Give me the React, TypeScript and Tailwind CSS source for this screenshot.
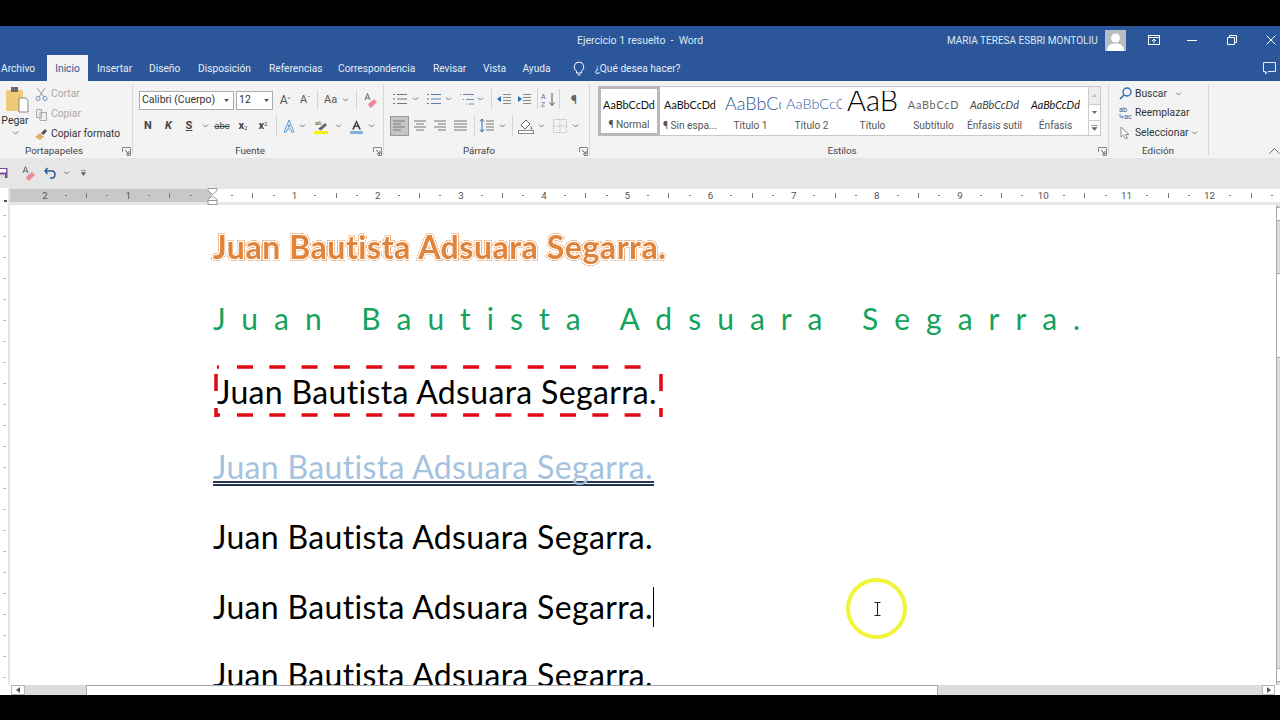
import React from "react";

const ui = "font-['Roboto','Open_Sans',sans-serif]";
const doc = "font-['Lato','Carlito',sans-serif]";

const Chev = ({ className = "" }: { className?: string }) => (
  <svg width="7" height="4" viewBox="0 0 7 4" className={className}>
    <path d="M1 .5 3.5 3 6 .5" fill="none" stroke="#777" strokeWidth="1" />
  </svg>
);

const Launcher = () => (
  <svg width="9" height="9" viewBox="0 0 9 9">
    <path d="M.5 5V.5H8.5V8.5H5" fill="none" stroke="#888" />
    <path d="M3 3 7 7M7 4V7H4" fill="none" stroke="#666" />
  </svg>
);

const Eraser = () => (
  <svg width="16" height="17" viewBox="0 0 16 17">
    <path d="M3 8 5.5 1.5 8 8M4 6H7" fill="none" stroke="#666" strokeWidth="1" />
    <path d="M6 12 12 7 15 10 9.5 15.5H7.5Z" fill="#ef8a9b" />
  </svg>
);

const Lines = ({ kind }: { kind: "l" | "c" | "r" | "j" }) => {
  const d = {
    l: "M1 2H13M1 5H9M1 8H13M1 11H9",
    c: "M1 2H13M3 5H11M1 8H13M3 11H11",
    r: "M1 2H13M5 5H13M1 8H13M5 11H13",
    j: "M1 2H14M1 5H14M1 8H14M1 11H14",
  }[kind];
  return (
    <svg width="15" height="13" viewBox="0 0 15 13">
      <path d={d} stroke="#777" strokeWidth="1" fill="none" />
    </svg>
  );
};

const Sep = ({ className = "" }: { className?: string }) => (
  <div className={`w-px h-[20px] bg-[#d4d4d4] ${className}`} />
);

const Tab = ({ label, className }: { label: string; className: string }) => (
  <div className={`text-center whitespace-nowrap ${className}`}>{label}</div>
);

const Style = ({
  sample,
  label,
  sampleClass,
  rowClass = "justify-center",
  itemClass = "w-[61px]",
}: {
  sample: string;
  label: string;
  sampleClass: string;
  rowClass?: string;
  itemClass?: string;
}) => (
  <div className={`h-full flex flex-col items-center overflow-hidden ${itemClass}`}>
    <div className={`h-[27px] w-full flex items-end overflow-hidden px-[5px] ${rowClass}`}>
      <div className={`whitespace-nowrap ${sampleClass}`}>{sample}</div>
    </div>
    <div className={`${ui} text-[10.2px] leading-[12px] mt-[6px] text-[#555] whitespace-nowrap`}>{label}</div>
  </div>
);

const GroupLabel = ({ text, textClass, launcherClass }: { text: string; textClass: string; launcherClass?: string }) => (
  <div className={`${ui} h-[13px] shrink-0 flex items-center text-[9.8px] text-[#444]`}>
    <div className={`text-center whitespace-nowrap shrink-0 ${textClass}`}>{text}</div>
    {launcherClass && (
      <div className={launcherClass}>
        <Launcher />
      </div>
    )}
  </div>
);

const rulerNumbers = ["2", "1", "", "1", "2", "3", "4", "5", "6", "7", "8", "9", "10", "11", "12", ""];

const RulerCell = ({ n }: { n: string }) => (
  <div className="w-[83.2px] shrink-0 flex items-center text-[#555]">
    <div className={`${ui} w-1/4 text-center text-[9.8px] leading-none`}>{n}</div>
    <div className="w-1/4 flex justify-center"><div className="w-[2px] h-px bg-[#777]" /></div>
    <div className="w-1/4 flex justify-center"><div className="w-px h-[5px] bg-[#777]" /></div>
    <div className="w-1/4 flex justify-center"><div className="w-[2px] h-px bg-[#777]" /></div>
  </div>
);

const lineText = "Juan Bautista Adsuara Segarra.";

export default function App() {
  return (
    <div className="w-[1280px] h-[720px] bg-black flex flex-col overflow-hidden relative">
      <div className="h-[26px] shrink-0" />

      {/* title bar */}
      <div className={`${ui} h-[29px] shrink-0 bg-[#2b579a] text-[#dfe7f3] flex items-center text-[10.5px] pt-[1px]`}>
        <div className="w-[577px]" />
        <div className="w-[125px] text-center whitespace-nowrap">Ejercicio 1 resuelto&nbsp; -&nbsp; Word</div>
        <div className="w-[245px]" />
        <div className="w-[150px] text-center whitespace-nowrap text-[10px] -mt-[2px]">MARIA TERESA ESBRI MONTOLIU</div>
        <div className="ml-[8px] w-[21px] h-[21px] -mt-[2px] bg-[#b9bcc2] overflow-hidden">
          <svg width="21" height="21" viewBox="0 0 21 21">
            <circle cx="10.5" cy="8" r="4.5" fill="#fff" />
            <path d="M2 21C2 15 6 13.5 10.5 13.5S19 15 19 21Z" fill="#fff" />
          </svg>
        </div>
        <div className="ml-[22px] w-[12px] flex justify-center -mt-[2px]">
          <svg width="12" height="10" viewBox="0 0 12 10">
            <rect x=".5" y=".5" width="11" height="9" fill="none" stroke="#fff" />
            <path d="M.5 2.5H11.5M6 8V4M4 6 6 4 8 6" fill="none" stroke="#fff" />
          </svg>
        </div>
        <div className="ml-[27px] w-[10px] h-px bg-white -mt-[2px]" />
        <div className="ml-[30px] -mt-[2px]">
          <svg width="10" height="10" viewBox="0 0 10 10">
            <path d="M.5 2.5H7.5V9.5H.5ZM2.5 2.5V.5H9.5V7.5H7.5" fill="none" stroke="#fff" />
          </svg>
        </div>
        <div className="ml-[29px] -mt-[2px]">
          <svg width="10" height="10" viewBox="0 0 10 10">
            <path d="M.5.5 9.5 9.5M9.5.5.5 9.5" fill="none" stroke="#fff" />
          </svg>
        </div>
      </div>

      {/* tabs */}
      <div className={`${ui} h-[26px] shrink-0 bg-[#2b579a] text-[#e6ecf5] flex items-center text-[10.2px] relative`}>
        <Tab label="Archivo" className="ml-[1px] w-[34px] pt-[1px]" />
        <div className="ml-[12px] w-[41px] h-full bg-[#f3f3f3] text-[#2b579a] flex items-center justify-center pt-[1px]">Inicio</div>
        <Tab label="Insertar" className="ml-[9px] w-[34px] pt-[1px]" />
        <Tab label="Diseño" className="ml-[18px] w-[31px] pt-[1px]" />
        <Tab label="Disposición" className="ml-[18px] w-[53px] pt-[1px]" />
        <Tab label="Referencias" className="ml-[18px] w-[52px] pt-[1px]" />
        <Tab label="Correspondencia" className="ml-[17px] w-[76px] pt-[1px]" />
        <Tab label="Revisar" className="ml-[19px] w-[32px] pt-[1px]" />
        <Tab label="Vista" className="ml-[18px] w-[21px] pt-[1px]" />
        <Tab label="Ayuda" className="ml-[18px] w-[29px] pt-[1px]" />
        <div className="ml-[21px] w-[13px] flex justify-center">
          <svg width="12" height="15" viewBox="0 0 12 15">
            <path d="M6 1A5 5 0 0 0 3.5 10.2V12H8.5V10.2A5 5 0 0 0 6 1ZM4.5 14H7.5" fill="none" stroke="#fff" strokeWidth="1" />
          </svg>
        </div>
        <Tab label="¿Qué desea hacer?" className="ml-[10px] w-[84px] pt-[1px]" />
        <div className="flex-1" />
        <div className="mr-[4px]">
          <svg width="13" height="13" viewBox="0 0 13 13">
            <path d="M.5.5H12.5V9.5H5L2.5 12V9.5H.5Z" fill="none" stroke="#e6ecf5" />
          </svg>
        </div>
      </div>

      {/* ribbon */}
      <div className={`${ui} h-[77px] shrink-0 bg-[#f3f3f3] flex text-[10.3px] text-[#333] relative`}>
        {/* Portapapeles */}
        <div className="w-[133px] shrink-0 flex flex-col border-r border-[#d8d8d8] my-[3px]">
          <div className="h-[61px] shrink-0 flex">
            <div className="w-[30px] flex flex-col items-center">
              <svg width="24" height="27" viewBox="0 0 24 27" className="mt-[2px] ml-[3px]">
                <rect x="1" y="4" width="17" height="21" rx="1" fill="#f0c979" />
                <rect x="6" y="1" width="7" height="5" fill="#6b6b6b" />
                <path d="M14 12H21L23 14.5V26H14Z" fill="#fff" stroke="#888" />
              </svg>
              <div className="leading-[13px] mt-[1px] text-[10.5px]">Pegar</div>
              <Chev className="mt-[4px]" />
            </div>
            <div className="flex flex-col ml-[5px]">
              <div className="h-[20px] flex items-center text-[#aaa]">
                <svg width="13" height="14" viewBox="0 0 13 14" className="mr-[3px]">
                  <path d="M2 1 9 10M10 1 4 10" stroke="#999" fill="none" />
                  <circle cx="3" cy="11.5" r="2" fill="none" stroke="#6f93bd" />
                  <circle cx="10" cy="11.5" r="2" fill="none" stroke="#6f93bd" />
                </svg>
                Cortar
              </div>
              <div className="h-[20px] flex items-center text-[#aaa]">
                <svg width="13" height="13" viewBox="0 0 13 13" className="mr-[3px]">
                  <path d="M1.5 1.5H6.5V9.5H1.5ZM5 4.5H11.5V12.5H5Z" fill="#eee" stroke="#aaa" />
                </svg>
                Copiar
              </div>
              <div className="h-[20px] flex items-center">
                <svg width="13" height="13" viewBox="0 0 13 13" className="mr-[3px]">
                  <path d="M0 9 5 5 9 9 5 12Z" fill="#d8b46a" />
                  <path d="M6 5 10 1 12 3 8.5 7Z" fill="#555" />
                </svg>
                <span className="whitespace-nowrap">Copiar formato</span>
              </div>
            </div>
          </div>
          <GroupLabel text="Portapapeles" textClass="w-[108px]" launcherClass="ml-[14px]" />
        </div>

        {/* Fuente */}
        <div className="w-[251px] shrink-0 flex flex-col border-r border-[#d8d8d8] my-[3px]">
          <div className="h-[61px] shrink-0 flex flex-col">
            <div className="flex items-center h-[20px] mt-[6px] pl-[6px]">
              <div className="w-[95px] h-[19px] bg-white border border-[#ababab] flex items-center px-[1px] text-[10.5px] whitespace-nowrap">
                <span className="flex-1 pl-[1px]">Calibri (Cuerpo)</span>
                <svg width="5" height="3" viewBox="0 0 5 3" className="mr-[3px]"><path d="M0 0H5L2.5 3Z" fill="#555" /></svg>
              </div>
              <div className="ml-[2px] w-[37px] h-[19px] bg-white border border-[#ababab] flex items-center pl-[2px] text-[10.5px]">
                <span className="flex-1">12</span>
                <svg width="5" height="3" viewBox="0 0 5 3" className="mr-[3px]"><path d="M0 0H5L2.5 3Z" fill="#555" /></svg>
              </div>
              <div className="ml-[2px] w-[20px] text-center text-[12px] text-[#555]">A<sup className="text-[6px]">^</sup></div>
              <div className="w-[20px] text-center text-[11px] text-[#555]">A<sup className="text-[6px]">ˇ</sup></div>
              <Sep className="ml-[2px]" />
              <div className="ml-[6px] w-[15px] text-[11px] text-[#555]">Aa</div>
              <Chev className="ml-[3px]" />
              <Sep className="ml-[7px]" />
              <div className="ml-[5px]"><Eraser /></div>
            </div>
            <div className="flex items-center h-[20px] mt-[6px] pl-[5px] text-[#444] font-bold">
              <div className="w-[20px] text-center text-[11px] text-[#444]">N</div>
              <div className="w-[21px] text-center text-[11px] italic">K</div>
              <div className="w-[20px] text-center text-[11px] underline">S</div>
              <div className="w-[12px] flex justify-center"><Chev /></div>
              <div className="w-[22px] text-center text-[9.5px] font-normal line-through">abc</div>
              <div className="w-[20px] text-center text-[11px]">x<sub className="text-[6px] font-normal">2</sub></div>
              <div className="w-[20px] text-center text-[11px]">x<sup className="text-[6px] font-normal">2</sup></div>
              <Sep className="ml-[3px]" />
              <div className="w-[17px] ml-[3px] flex justify-center">
                <svg width="14" height="14" viewBox="0 0 14 14">
                  <path d="M7 1 2 13H4.5L5.5 10H8.5L9.5 13H12ZM6.2 8 7 5.5 7.8 8Z" fill="#eaf3fb" stroke="#5a9bd5" />
                </svg>
              </div>
              <div className="w-[10px] flex justify-center"><Chev /></div>
              <div className="w-[16px] ml-[6px] flex justify-center">
                <svg width="15" height="15" viewBox="0 0 15 15">
                  <text x="1" y="5.5" fontSize="6" fill="#555" fontWeight="400">ab</text>
                  <path d="M4 10 11 4 13 6 7 11.5Z" fill="#666" />
                  <rect x="0" y="12" width="14" height="3" fill="#f4f000" />
                </svg>
              </div>
              <div className="w-[14px] ml-[2px] flex justify-center"><Chev /></div>
              <div className="w-[16px] ml-[3px] flex justify-center">
                <svg width="15" height="15" viewBox="0 0 15 15">
                  <path d="M7.5 1 3 10.5H5L6 8H9L10 10.5H12ZM6.6 6.5 7.5 4 8.4 6.5Z" fill="#444" />
                  <rect x="1" y="12" width="13" height="3" rx="1" fill="#7fb2dd" />
                </svg>
              </div>
              <div className="w-[14px] flex justify-center"><Chev /></div>
            </div>
          </div>
          <GroupLabel text="Fuente" textClass="w-[234px]" launcherClass="ml-[6px]" />
        </div>

        {/* Párrafo */}
        <div className="w-[206px] shrink-0 flex flex-col border-r border-[#d8d8d8] my-[3px]">
          <div className="h-[61px] shrink-0 flex flex-col">
            <div className="flex items-center h-[20px] mt-[5px] pl-[8px]">
              <div className="w-[15px] flex justify-center">
                <svg width="14" height="12" viewBox="0 0 14 12"><path d="M0 1.5H2M4 1.5H14M0 6H2M4 6H14M0 10.5H2M4 10.5H14" stroke="#777" fill="none" /></svg>
              </div>
              <div className="w-[17px] flex justify-center"><Chev /></div>
              <div className="w-[15px] ml-[2px] flex justify-center">
                <svg width="14" height="12" viewBox="0 0 14 12"><path d="M0 1.5H2M4 1.5H14M0 6H2M4 6H14M0 10.5H2M4 10.5H14" stroke="#5b7fa8" fill="none" /></svg>
              </div>
              <div className="w-[15px] flex justify-center"><Chev /></div>
              <div className="w-[15px] ml-[3px] flex justify-center">
                <svg width="14" height="13" viewBox="0 0 14 13"><path d="M0 1.5H1M3 1.5H14M3 6.5H4M6 6.5H14M6 11H7M9 11H14" stroke="#6f88a6" fill="none" /></svg>
              </div>
              <div className="w-[13px] flex justify-center"><Chev /></div>
              <Sep className="ml-[4px]" />
              <div className="ml-[5px] w-[14px] flex justify-center">
                <svg width="14" height="12" viewBox="0 0 14 12"><path d="M6 1.5H14M6 4.5H14M6 7.5H14M6 10.5H14" stroke="#888" fill="none" /><path d="M0 6 4 3V9Z" fill="#2b6cb0" /></svg>
              </div>
              <div className="ml-[6px] w-[14px] flex justify-center">
                <svg width="14" height="12" viewBox="0 0 14 12"><path d="M6 1.5H14M6 4.5H14M6 7.5H14M6 10.5H14" stroke="#888" fill="none" /><path d="M5 6 1 3V9Z" fill="#2b6cb0" /></svg>
              </div>
              <Sep className="ml-[6px]" />
              <div className="ml-[3px] w-[15px] flex justify-center">
                <svg width="15" height="15" viewBox="0 0 15 15">
                  <text x="0" y="7" fontSize="7" fill="#4a6fa5">A</text>
                  <text x="0" y="14.5" fontSize="7" fill="#8a5ea8">Z</text>
                  <path d="M11 1V13M8.5 10.5 11 13.5 13.5 10.5" stroke="#555" fill="none" />
                </svg>
              </div>
              <Sep className="ml-[3px]" />
              <div className="ml-[9px] w-[10px] text-center text-[13px] text-[#666] leading-none">¶</div>
            </div>
            <div className="flex items-center h-[21px] mt-[6px] pl-[6px]">
              <div className="w-[19px] h-[20px] bg-[#c6c6c6] border border-[#999] flex items-center justify-center"><Lines kind="l" /></div>
              <div className="ml-[2px] w-[18px] flex justify-center"><Lines kind="c" /></div>
              <div className="ml-[2px] w-[18px] flex justify-center"><Lines kind="r" /></div>
              <div className="ml-[2px] w-[18px] flex justify-center"><Lines kind="j" /></div>
              <Sep className="ml-[5px]" />
              <div className="ml-[4px] w-[15px] flex justify-center">
                <svg width="15" height="15" viewBox="0 0 15 15">
                  <path d="M3 1V14M1 3.5 3 1 5 3.5M1 11.5 3 14 5 11.5" stroke="#2b6cb0" fill="none" />
                  <path d="M7 3H15M7 6H15M7 9H15M7 12H15" stroke="#777" />
                </svg>
              </div>
              <div className="ml-[3px] w-[11px] flex justify-center"><Chev /></div>
              <Sep className="ml-[4px]" />
              <div className="ml-[5px] w-[16px] flex justify-center">
                <svg width="16" height="16" viewBox="0 0 16 16">
                  <path d="M3 7 8 2 12 6 7 11Z" fill="#fff" stroke="#666" />
                  <path d="M13 8C14 10 15 10 14 11.5 12.5 11.5 12.5 9.5 13 8Z" fill="#666" />
                  <rect x=".5" y="12.5" width="15" height="3" fill="#fff" stroke="#888" />
                </svg>
              </div>
              <div className="ml-[2px] w-[11px] flex justify-center"><Chev /></div>
              <div className="ml-[5px] w-[15px] flex justify-center">
                <svg width="14" height="14" viewBox="0 0 14 14">
                  <path d="M.5.5H13.5V13.5H.5ZM7 .5V13.5M.5 7H13.5" fill="none" stroke="#bbb" strokeDasharray="1.5 1" />
                </svg>
              </div>
              <div className="ml-[3px] w-[11px] flex justify-center"><Chev /></div>
            </div>
          </div>
          <GroupLabel text="Párrafo" textClass="w-[190px]" launcherClass="ml-[5px]" />
        </div>

        {/* Estilos */}
        <div className="w-[519px] shrink-0 flex flex-col border-r border-[#d8d8d8] my-[3px]">
          <div className="h-[61px] shrink-0 pl-[8px] pt-[2px]">
            <div className="w-[503px] h-[50px] bg-white border border-[#c9c9c9] flex">
              <div className="w-[62px] h-[50px] -mt-px -ml-px border-[3px] border-[#b9b9b9] shrink-0 flex flex-col items-center overflow-hidden">
                <div className="h-[24px] flex items-end text-[10.8px] text-[#111] font-['Lato',sans-serif] whitespace-nowrap">AaBbCcDd</div>
                <div className="text-[10.2px] leading-[12px] mt-[6px] text-[#555] whitespace-nowrap">¶ Normal</div>
              </div>
              <Style itemClass="w-[60px]" sample="AaBbCcDd" label="¶ Sin espa..." sampleClass="font-['Lato',sans-serif] text-[10.8px] text-[#111] mb-[1px]" />
              <Style rowClass="justify-start" sample="AaBbCc" label="Título 1" sampleClass="font-['Lato',sans-serif] text-[18px] leading-[22px] text-[#2f5496] font-light" />
              <Style rowClass="justify-start" sample="AaBbCcC" label="Título 2" sampleClass="font-['Lato',sans-serif] text-[14.5px] leading-[20px] text-[#3a62a8] font-light" />
              <Style sample="AaB" label="Título" sampleClass="font-['Lato',sans-serif] text-[29px] h-[21px] leading-[17px] overflow-hidden mb-[2px] font-light text-black" />
              <Style sample="AaBbCcD" label="Subtítulo" sampleClass="font-['Lato',sans-serif] text-[10.8px] tracking-[0.8px] text-[#666] mb-[1px]" />
              <Style sample="AaBbCcDd" label="Énfasis sutil" sampleClass="font-['Lato',sans-serif] italic text-[10.8px] text-[#444] mb-[1px]" />
              <Style sample="AaBbCcDd" label="Énfasis" sampleClass="font-['Lato',sans-serif] italic text-[10.8px] text-[#111] mb-[1px]" />
              <div className="flex-1" />
              <div className="w-[12px] h-full border-l border-[#ccc] flex flex-col bg-white">
                <div className="h-[18px] bg-[#ececec] border-b border-[#ccc] flex items-center justify-center">
                  <svg width="5" height="3" viewBox="0 0 5 3"><path d="M0 3H5L2.5 0Z" fill="#bbb" /></svg>
                </div>
                <div className="h-[16px] border-b border-[#ccc] flex items-center justify-center">
                  <svg width="5" height="3" viewBox="0 0 5 3"><path d="M0 0H5L2.5 3Z" fill="#666" /></svg>
                </div>
                <div className="flex-1 flex items-center justify-center">
                  <svg width="7" height="6" viewBox="0 0 7 6"><path d="M0 .5H7M1 2.5H6L3.5 5.5Z" fill="#666" stroke="#666" strokeWidth=".6" /></svg>
                </div>
              </div>
            </div>
          </div>
          <GroupLabel text="Estilos" textClass="w-[504px]" launcherClass="ml-[4px]" />
        </div>

        {/* Edición */}
        <div className="w-[100px] shrink-0 flex flex-col border-r border-[#d8d8d8] my-[3px]">
          <div className="h-[61px] shrink-0 pl-[10px] flex flex-col">
            <div className="h-[19px] flex items-center">
              <svg width="13" height="13" viewBox="0 0 13 13" className="mr-[3px]">
                <circle cx="8" cy="5" r="4" fill="none" stroke="#2b6cb0" strokeWidth="1.4" />
                <path d="M5 8 1 12" stroke="#2b6cb0" strokeWidth="1.6" />
              </svg>
              Buscar
              <Chev className="ml-[8px]" />
            </div>
            <div className="h-[20px] flex items-center">
              <svg width="14" height="14" viewBox="0 0 14 14" className="mr-[2px]">
                <text x="0" y="6" fontSize="7.5" fill="#555">ab</text>
                <text x="5" y="13" fontSize="7.5" fill="#2b6cb0">ac</text>
                <path d="M1 8V11H4M3 9.5 4.5 11 3 12.5" fill="none" stroke="#2b6cb0" strokeWidth=".8" />
              </svg>
              Reemplazar
            </div>
            <div className="h-[19px] flex items-center">
              <svg width="11" height="14" viewBox="0 0 11 14" className="mr-[4px] ml-[1px]">
                <path d="M1 1V11L3.5 9 5.5 13 7.5 12 5.5 8.5H9Z" fill="#fff" stroke="#888" />
              </svg>
              Seleccionar
              <Chev className="ml-[3px]" />
            </div>
          </div>
          <GroupLabel text="Edición" textClass="w-[98px]" />
        </div>

        <div className="flex-1 flex items-end justify-end pb-[4px]">
          <svg width="11" height="6" viewBox="0 0 11 6"><path d="M.5 5.5 5.5.5 10.5 5.5" fill="none" stroke="#666" /></svg>
        </div>
      </div>

      {/* QAT */}
      <div className="h-[30px] shrink-0 bg-[#e6e6e6] flex items-center">
        <svg width="8" height="12" viewBox="0 0 8 12">
          <path d="M0 1H7.5V11H0Z" fill="#7a4f9c" />
          <rect x="0" y="2" width="6" height="3.5" fill="#fff" />
          <rect x="0" y="7.5" width="5" height="3.5" fill="#ddd" />
        </svg>
        <div className="ml-[12px]"><Eraser /></div>
        <svg width="14" height="12" viewBox="0 0 14 12" className="ml-[8px]">
          <path d="M1 4H9A4 4 0 0 1 9 11H6M3.5 1 1 4 3.5 7" fill="none" stroke="#2b579a" strokeWidth="1.5" />
        </svg>
        <Chev className="ml-[5px]" />
        <svg width="5" height="6" viewBox="0 0 5 6" className="ml-[11px]"><path d="M0 .5H5M.5 2.5H4.5L2.5 5.5Z" fill="#555" stroke="#555" strokeWidth=".5" /></svg>
      </div>

      {/* ruler */}
      <div className="h-[17px] shrink-0 flex bg-[#e6e6e6]">
        <div className="w-[8px] shrink-0 h-full bg-white flex items-end justify-end pb-[3px] pr-[1px]">
          <div className="w-[3px] h-[2px] bg-[#555]" />
        </div>
        <div className="w-[2px] shrink-0" />
        <div className="flex-1 min-w-0 relative">
          <div className="h-[13px] mt-px overflow-hidden flex items-center bg-[linear-gradient(90deg,#c8c8c8_0,#c8c8c8_202px,#fff_202px)]">
            <div className="flex ml-[24.6px] shrink-0">
              {rulerNumbers.map((n, i) => (
                <RulerCell key={i} n={n} />
              ))}
            </div>
          </div>
          <svg width="11" height="17" viewBox="0 0 11 17" className="absolute left-[197px] top-0">
            <path d="M1 .5H10V2.5L5.5 6.5 1 2.5Z" fill="#fff" stroke="#999" />
            <path d="M5.5 8 1 11.5V16.5H10V11.5Z" fill="#fff" stroke="#999" />
            <path d="M1 12.5H10" stroke="#999" />
          </svg>
        </div>
      </div>

      {/* document */}
      <div className="h-[480px] shrink-0 flex bg-white overflow-hidden">
        <div className="w-[8px] h-full shrink-0 bg-white flex flex-col items-center gap-[20px] pt-[10px]">
          {Array.from({ length: 24 }).map((_, i) => (
            <div key={i} className="w-[3px] h-px bg-[#bbb] shrink-0" />
          ))}
        </div>
        <div className="w-[2px] h-full shrink-0 bg-[#e6e6e6]" />
        <div className={`${doc} flex-1 pl-[203px] pt-[20px] overflow-hidden text-black text-[32px] tracking-[0.33px] leading-[44px] whitespace-nowrap relative`}>
          <div className="h-[44px] font-bold text-[#e0843c] tracking-[0.55px] [-webkit-text-stroke:3px_#fff] [paint-order:stroke_fill] [filter:drop-shadow(0_0_0.7px_#e8853a)_drop-shadow(0_0_0.6px_#e8853a)_drop-shadow(0_0_0.4px_#e8853a)]">
            {lineText}
          </div>
          <div className="h-[44px] mt-[27px] text-[#14a35c] text-[30px] tracking-[16px]">{lineText}</div>
          <div className="mt-[27px] w-[450px] h-[50px] relative flex items-center pl-[4px] leading-none">
            {lineText}
            <svg width="450" height="56" viewBox="0 0 450 56" className="absolute left-0 -top-[3px]">
              <path d="M24 3H440M24 51H440" fill="none" stroke="#e00a14" strokeWidth="3.5" strokeDasharray="16 16.3" />
              <path d="M3 10V27M3 44V53M448 10V27M448 44V53M3 51H7M4 3H6" fill="none" stroke="#e00a14" strokeWidth="3.5" />
            </svg>
          </div>
          <div className="mt-[29px] h-[40px] w-[441px] border-b-[5px] border-double border-[#24384f] text-[#a5c2de] leading-[42px]">{lineText}</div>
          <div className="h-[44px] mt-[29px]">{lineText}</div>
          <div className="h-[44px] mt-[26px] flex items-center">
            <span>{lineText}</span>
            <span className="inline-block w-[1.5px] h-[40px] bg-black" />
          </div>
          <div className="h-[44px] mt-[24px]">{lineText}</div>

          {/* cursor highlight */}
          <div className="absolute left-[836px] top-[373px] w-[61px] h-[61px] rounded-full border-[4px] border-[#f0f53a] flex items-center justify-center">
            <svg width="7" height="14" viewBox="0 0 7 14" className="ml-[1px]">
              <path d="M.5.5H6.5M3.5.5V13.5M.5 13.5H6.5" fill="none" stroke="#222" strokeWidth="1.1" />
            </svg>
          </div>
        </div>
        <div className="w-[4px] h-full shrink-0 flex flex-col bg-[#dcdcdc] border-l border-[#aaa]">
          <div className="h-[14px] mt-[2px] bg-white border-y border-[#aaa]" />
          <div className="h-[52px]" />
          <div className="h-[85px] bg-white border-y border-[#aaa]" />
          <div className="flex-1" />
          <div className="h-[14px] mb-[3px] bg-white border-y border-[#aaa]" />
        </div>
      </div>

      {/* bottom scrollbar */}
      <div className="h-[10px] shrink-0 bg-white flex items-stretch">
        <div className="w-[11px]" />
        <div className="w-[14px] border border-[#b5b5b5] bg-white flex items-center justify-center">
          <svg width="4" height="6" viewBox="0 0 4 6"><path d="M4 0V6L0 3Z" fill="#555" /></svg>
        </div>
        <div className="w-[61px] bg-[#dcdcdc]" />
        <div className="w-[852px] bg-white border-t border-x border-[#a8a8a8]" />
        <div className="w-[324px] bg-[#dcdcdc]" />
        <div className="w-[13px] border border-[#b5b5b5] bg-white flex items-center justify-center">
          <svg width="4" height="6" viewBox="0 0 4 6"><path d="M0 0V6L4 3Z" fill="#555" /></svg>
        </div>
      </div>

      <div className="flex-1 bg-black" />
    </div>
  );
}
